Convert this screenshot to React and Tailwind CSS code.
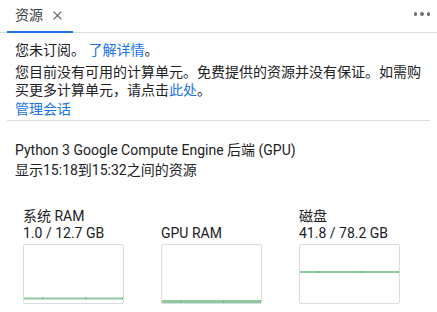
import React from 'react';

/* Colab "资源" side panel: tab header, subscription notice, backend info and
   three small usage charts (system RAM / GPU RAM / disk). */

const FONT = { fontFamily: "Roboto, 'Noto Sans CJK SC', sans-serif" };

const CHARTS = [
  { title: '系统 RAM', value: '1.0 / 12.7 GB', pct: 1.0 / 12.7 },
  { title: null, value: 'GPU RAM', pct: 0 },
  { title: '磁盘', value: '41.8 / 78.2 GB', pct: 41.8 / 78.2 },
];

function UsageChart({ pct }) {
  const h = 58, w = 99;
  const y = Math.min(h - 1.5, h - pct * h);
  const ticks = [18, 61, 98];
  return (
    <div className="w-[101px] h-[60px] border border-[#dadce0] rounded-[2px] bg-white">
      <svg width={w} height={h} className="block">
        <line x1="0" y1={y} x2={w} y2={y} stroke="#8fcaa1" strokeWidth={pct === 0 ? 3 : 2} />
        {ticks.map((t) => (
          <rect key={t} x={t} y={y - 1} width="1.2" height="2" fill="#6db383" />
        ))}
      </svg>
    </div>
  );
}

export default function App() {
  return (
    <div className="w-[437px] h-[312px] bg-white text-[#202124] overflow-hidden" style={FONT}>
      {/* Tab header */}
      <div className="h-[33px] flex items-stretch border-b border-[#dadce0] pl-[7px] pr-[7px]">
        <div className="w-[66px] flex items-center pl-[8px] gap-[10px] border-b-2 border-[#1a73e8] mb-[-1px] pb-[1px]">
          <span className="text-[14px] leading-[18px] text-[#3c4043]">资源</span>
          <svg width="9" height="9" viewBox="0 0 9 9" className="mt-[1px]">
            <path d="M0.6 0.6 L8.4 8.4 M8.4 0.6 L0.6 8.4" stroke="#5f6368" strokeWidth="1.3" />
          </svg>
        </div>
        <div className="ml-auto flex items-center gap-[2px] pr-[0px] pb-[4px]">
          <span className="w-[3.5px] h-[3.5px] rounded-full bg-[#6f6f6f]" />
          <span className="w-[3.5px] h-[3.5px] rounded-full bg-[#6f6f6f] ml-[1px]" />
          <span className="w-[3.5px] h-[3.5px] rounded-full bg-[#6f6f6f] ml-[1px]" />
        </div>
      </div>

      {/* Subscription notice */}
      <div className="px-[15px] pt-[7px] text-[14px]">
        <div className="leading-[20px]">
          您未订阅。 <span className="text-[#1a73e8]">了解详情</span>。
        </div>
        <div className="leading-[18px] mt-[3px]">
          您目前没有可用的计算单元。免费提供的资源并没有保证。如需购买更多计算单元，请点击<span className="text-[#1a73e8]">此处</span>。
        </div>
        <div className="leading-[18px] mt-[1px] text-[#1a73e8]">管理会话</div>
      </div>
      <div className="mx-[7px] mt-[2px] border-t border-[#dadce0]" />

      {/* Backend info */}
      <div className="px-[15px] pt-[19px] text-[14px] leading-[20px]">
        <div>Python 3 Google Compute Engine 后端 (GPU)</div>
        <div>显示15:18到15:32之间的资源</div>
      </div>

      {/* Charts */}
      <div className="flex gap-[37px] pl-[23px] pt-[28px] text-[14px] leading-[17px]">
        {CHARTS.map((c, i) => (
          <div key={i} className="w-[101px] flex flex-col">
            <div className="h-[17px]">{c.title}</div>
            <div className="whitespace-nowrap">{c.value}</div>
            <div className="mt-[2px]">
              <UsageChart pct={c.pct} />
            </div>
          </div>
        ))}
      </div>
    </div>
  );
}
